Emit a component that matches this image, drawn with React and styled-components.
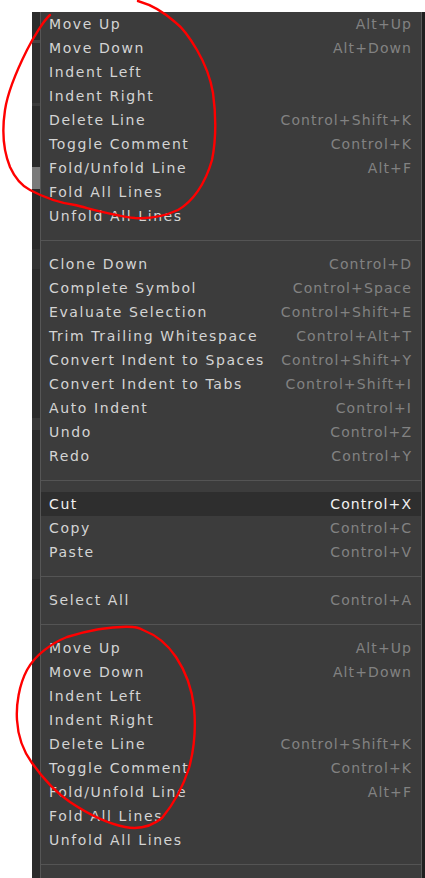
import React from 'react';
import styled, { createGlobalStyle } from 'styled-components';

const GlobalStyle = createGlobalStyle`
    html, body {
        margin: 0;
        padding: 0;
        background: #ffffff;
    }
    body {
        font-family: "DejaVu Sans", "Liberation Sans", sans-serif;
    }
`;

// 전체 화면
const Screen = styled.div`
    position: relative;
    width: 425px;
    height: 878px;
    overflow: hidden;
    background: #ffffff;
    padding-top: 12px;
    padding-left: 32px;
    box-sizing: border-box;
    display: flex;
`;

// 메뉴 뒤 에디터
const Backdrop = styled.div`
    width: 8px;
    flex: none;
    background: #2b2b2b;
    display: flex;
    flex-direction: column;
`;

const BackdropBar = styled.div`
    height: ${props => props.h}px;
    background: ${props => props.c};
`;

// 팝업 메뉴
const Menu = styled.div`
    width: 380px;
    flex: none;
    background: #3c3c3c;
    border-left: 1px solid #565656;
    border-right: 1px solid #595959;
    display: flex;
    flex-direction: column;
`;

const Edge = styled.div`
    flex: 1;
    background: #1f1f1f;
`;

const Item = styled.div`
    height: 24px;
    display: flex;
    align-items: center;
    justify-content: space-between;
    padding: 0 10px 0 8px;
    background: ${props => (props.active ? '#2e2e2e' : 'transparent')};
    font-size: 14px;
    white-space: nowrap;
`;

const Label = styled.span`
    letter-spacing: 1.6px;
    color: ${props => (props.active ? '#f2f2f2' : '#d4d4d4')};
`;

const Shortcut = styled.span`
    letter-spacing: 1.1px;
    margin-right: -1.1px;
    color: ${props => (props.active ? '#f2f2f2' : '#828282')};
`;

const Separator = styled.div`
    height: 24px;
    display: flex;
    align-items: center;
    &::after {
        content: '';
        flex: 1;
        height: 1px;
        background: #545454;
    }
`;

const Scribble = styled.svg`
    position: absolute;
    left: 0;
    top: 0;
    pointer-events: none;
`;

const lineItems = [
    ['Move Up', 'Alt+Up'],
    ['Move Down', 'Alt+Down'],
    ['Indent Left', ''],
    ['Indent Right', ''],
    ['Delete Line', 'Control+Shift+K'],
    ['Toggle Comment', 'Control+K'],
    ['Fold/Unfold Line', 'Alt+F'],
    ['Fold All Lines', ''],
    ['Unfold All Lines', ''],
];

const groups = [
    lineItems,
    [
        ['Clone Down', 'Control+D'],
        ['Complete Symbol', 'Control+Space'],
        ['Evaluate Selection', 'Control+Shift+E'],
        ['Trim Trailing Whitespace', 'Control+Alt+T'],
        ['Convert Indent to Spaces', 'Control+Shift+Y'],
        ['Convert Indent to Tabs', 'Control+Shift+I'],
        ['Auto Indent', 'Control+I'],
        ['Undo', 'Control+Z'],
        ['Redo', 'Control+Y'],
    ],
    [
        ['Cut', 'Control+X', true],
        ['Copy', 'Control+C'],
        ['Paste', 'Control+V'],
    ],
    [['Select All', 'Control+A']],
    lineItems,
];

const backdropBars = [
    [28, '#2b2b2b'], [3, '#444444'], [60, '#2e2e2e'], [3, '#3a3a3a'], [62, '#2a2a2a'],
    [22, '#7a7a7a'], [60, '#2a2a2a'], [20, '#333333'], [150, '#2b2b2b'], [12, '#383838'],
    [120, '#2a2a2a'], [30, '#333333'], [300, '#2b2b2b'],
];

const App = () => {
    return (
        <Screen>
            <GlobalStyle />
            <Backdrop>
                {backdropBars.map(([h, c], i) => <BackdropBar key={i} h={h} c={c} />)}
            </Backdrop>
            <Menu>
                {groups.map((group, gi) => (
                    <React.Fragment key={gi}>
                        {group.map(([label, keys, active], i) => (
                            <Item key={i} active={active}>
                                <Label active={active}>{label}</Label>
                                <Shortcut active={active}>{keys}</Shortcut>
                            </Item>
                        ))}
                        <Separator />
                    </React.Fragment>
                ))}
            </Menu>
            <Edge />
            <Scribble width="425" height="878" viewBox="0 0 425 878">
                <path
                    d="M50 15 C44 20 33 38 27 50 C18 68 8 90 5 110 C2 130 3 150 10 167 C15 178 22 186 30 190 C45 198 60 203 75 205 C95 210 115 216 135 218 C150 219 165 216 178 210 C192 202 205 185 212 160 C216 140 216 115 213 93 C210 75 204 62 197 50 C190 38 183 28 175 22 C165 13 152 5 138 1"
                    fill="none"
                    stroke="#ff0000"
                    strokeWidth="2.4"
                    strokeLinecap="round"
                />
                <path
                    d="M133 627 C115 626 90 630 67 637 C52 643 35 655 27 670 C19 685 16 705 17 720 C18 738 24 752 32 763 C42 777 55 792 70 802 C85 812 105 823 125 827 C140 830 152 826 162 818 C172 806 182 790 189 768 C194 750 196 728 194 707 C192 690 186 672 176 657 C168 645 156 635 143 630 C139 628 136 627 133 627"
                    fill="none"
                    stroke="#ff0000"
                    strokeWidth="2.4"
                    strokeLinecap="round"
                />
            </Scribble>
        </Screen>
    );
};

export default App;
